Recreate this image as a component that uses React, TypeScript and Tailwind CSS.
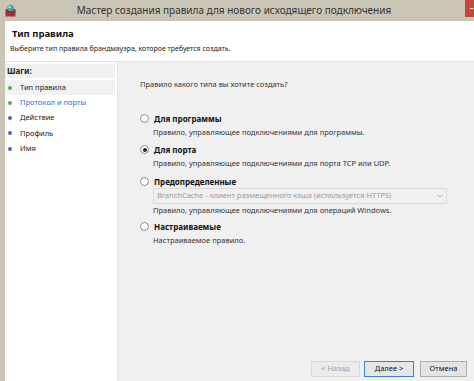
import React from 'react';

const font = { fontFamily: '"Noto Sans", "Open Sans", sans-serif' };

function Radio({ checked }: { checked?: boolean }) {
  return (
    <span className="w-[9px] h-[9px] rounded-full border border-[#8a8a8a] bg-white flex items-center justify-center shrink-0">
      {checked && <span className="w-[4px] h-[4px] rounded-full bg-[#222]" />}
    </span>
  );
}

function Option({ label, desc, checked, children }: { label: string; desc: string; checked?: boolean; children?: React.ReactNode }) {
  return (
    <div className="flex flex-col">
      <div className="flex items-center h-[15px] gap-[5px]">
        <Radio checked={checked} />
        <span className="font-bold text-[8px] text-[#111]">{label}</span>
      </div>
      {children}
      <div className="pl-[13px] h-[14px] flex items-center text-[7.5px] text-[#333]">{desc}</div>
    </div>
  );
}

const steps = [
  { name: 'Тип правила', dot: 'bg-[#4caf3a]', text: 'text-[#222]', active: true },
  { name: 'Протокол и порты', dot: 'bg-[#4caf3a]', text: 'text-[#2f6fd0]' },
  { name: 'Действие', dot: 'bg-[#5a5ac8]', text: 'text-[#222]' },
  { name: 'Профиль', dot: 'bg-[#5a5ac8]', text: 'text-[#222]' },
  { name: 'Имя', dot: 'bg-[#5a5ac8]', text: 'text-[#222]' },
];

export default function App() {
  return (
    <div className="w-[474px] h-[381px] bg-[#cbc5b6] flex flex-col overflow-hidden" style={font}>
      {/* Title bar */}
      <div className="h-[21px] flex items-center relative shrink-0">
        <svg width="11" height="13" viewBox="0 0 11 13" className="ml-[5px]">
          <rect x="0.5" y="5" width="10" height="7.5" fill="#a9323a" />
          <path d="M0.5 8h10M3 5v3M7 8v4.5" stroke="#7a1e24" strokeWidth="0.6" />
          <circle cx="5.5" cy="4" r="3.3" fill="#3fa7a9" />
          <circle cx="4.5" cy="3" r="1.2" fill="#b6ecec" />
        </svg>
        <span className="flex-1 text-center text-[10px] text-[#333] pr-[22px]">
          Мастер создания правила для нового исходящего подключения
        </span>
        <span className="absolute right-0 top-0 w-[9px] h-[17px] bg-[#c8463d] flex items-center justify-end pr-[1px]">
          <span className="w-[3px] h-[1px] bg-white" />
        </span>
      </div>

      <div className="flex-1 pl-[5px] flex">
        <div className="flex-1 bg-white flex flex-col">
          {/* Header */}
          <div className="h-[41px] px-[7px] pt-[6px] border-b border-[#e2e2e2] shrink-0">
            <div className="font-bold text-[9.5px] text-[#111] h-[14px] flex items-center">Тип правила</div>
            <div className="text-[7px] text-[#222] mt-[2px] h-[13px] flex items-center -ml-[2px]">
              Выберите тип правила брандмауэра, которое требуется создать.
            </div>
          </div>

          <div className="flex-1 flex">
            {/* Steps */}
            <div className="w-[112px] bg-white pt-[2px] pr-[2px] shrink-0">
              <div className="h-[14px] bg-[#f0f0f0] flex items-center pl-[2px] font-bold text-[8px] text-[#222]">Шаги:</div>
              <div className="flex flex-col mt-[2px] gap-[0.3px]">
                {steps.map((s) => (
                  <div key={s.name} className={`h-[15px] flex items-center gap-[8px] pl-[3px] ${s.active ? 'bg-[#f2f2f2]' : ''}`}>
                    <span className={`w-[4px] h-[4px] rounded-full ${s.dot}`} />
                    <span className={`text-[7.5px] ${s.text}`}>{s.name}</span>
                  </div>
                ))}
              </div>
            </div>

            {/* Content */}
            <div className="flex-1 bg-[#f0f0f0] border-l border-[#e4e4e4] flex flex-col pl-[22px] pr-[27px] pt-[16px] pb-[4px]">
              <div className="text-[7.5px] text-[#333] h-[14px] flex items-center">Правило какого типа вы хотите создать?</div>
              <div className="flex flex-col mt-[19px] gap-[2px]">
                <Option label="Для программы" desc="Правило, управляющее подключениями для программы." />
                <Option checked label="Для порта" desc="Правило, управляющее подключениями для порта TCP или UDP." />
                <div className="mt-[1px]">
                  <Option label="Предопределенные" desc="Правило, управляющее подключениями для операций Windows.">
                    <div className="ml-[13px] -mt-[1px] h-[16px] border border-[#dcdcdc] bg-[#f0f0f0] flex items-center justify-between px-[3px] text-[7.5px] text-[#9a9a9a]">
                      <span>BranchCache - клиент размещенного кэша (используется HTTPS)</span>
                      <svg width="6" height="4" viewBox="0 0 6 4">
                        <path d="M0.5 0.5L3 3L5.5 0.5" fill="none" stroke="#a0a0a0" strokeWidth="0.9" />
                      </svg>
                    </div>
                  </Option>
                </div>
                <div className="-mt-[1px]">
                  <Option label="Настраиваемые" desc="Настраиваемое правило." />
                </div>
              </div>

              <div className="flex-1" />
              <div className="flex justify-end gap-[4px] -mr-[20px]">
                <button className="w-[49px] h-[16px] border border-[#d8d8d8] bg-[#ececec] text-[7.5px] text-[#a0a0a0]">&lt; Назад</button>
                <button className="w-[50px] h-[16px] border border-[#3c7fd4] bg-[#e6e6e6] text-[7.5px] text-[#111] mr-[2px]">Далее &gt;</button>
                <button className="w-[47px] h-[16px] border border-[#adadad] bg-[#e4e4e4] text-[7.5px] text-[#111]">Отмена</button>
              </div>
            </div>
          </div>
        </div>
      </div>
    </div>
  );
}
